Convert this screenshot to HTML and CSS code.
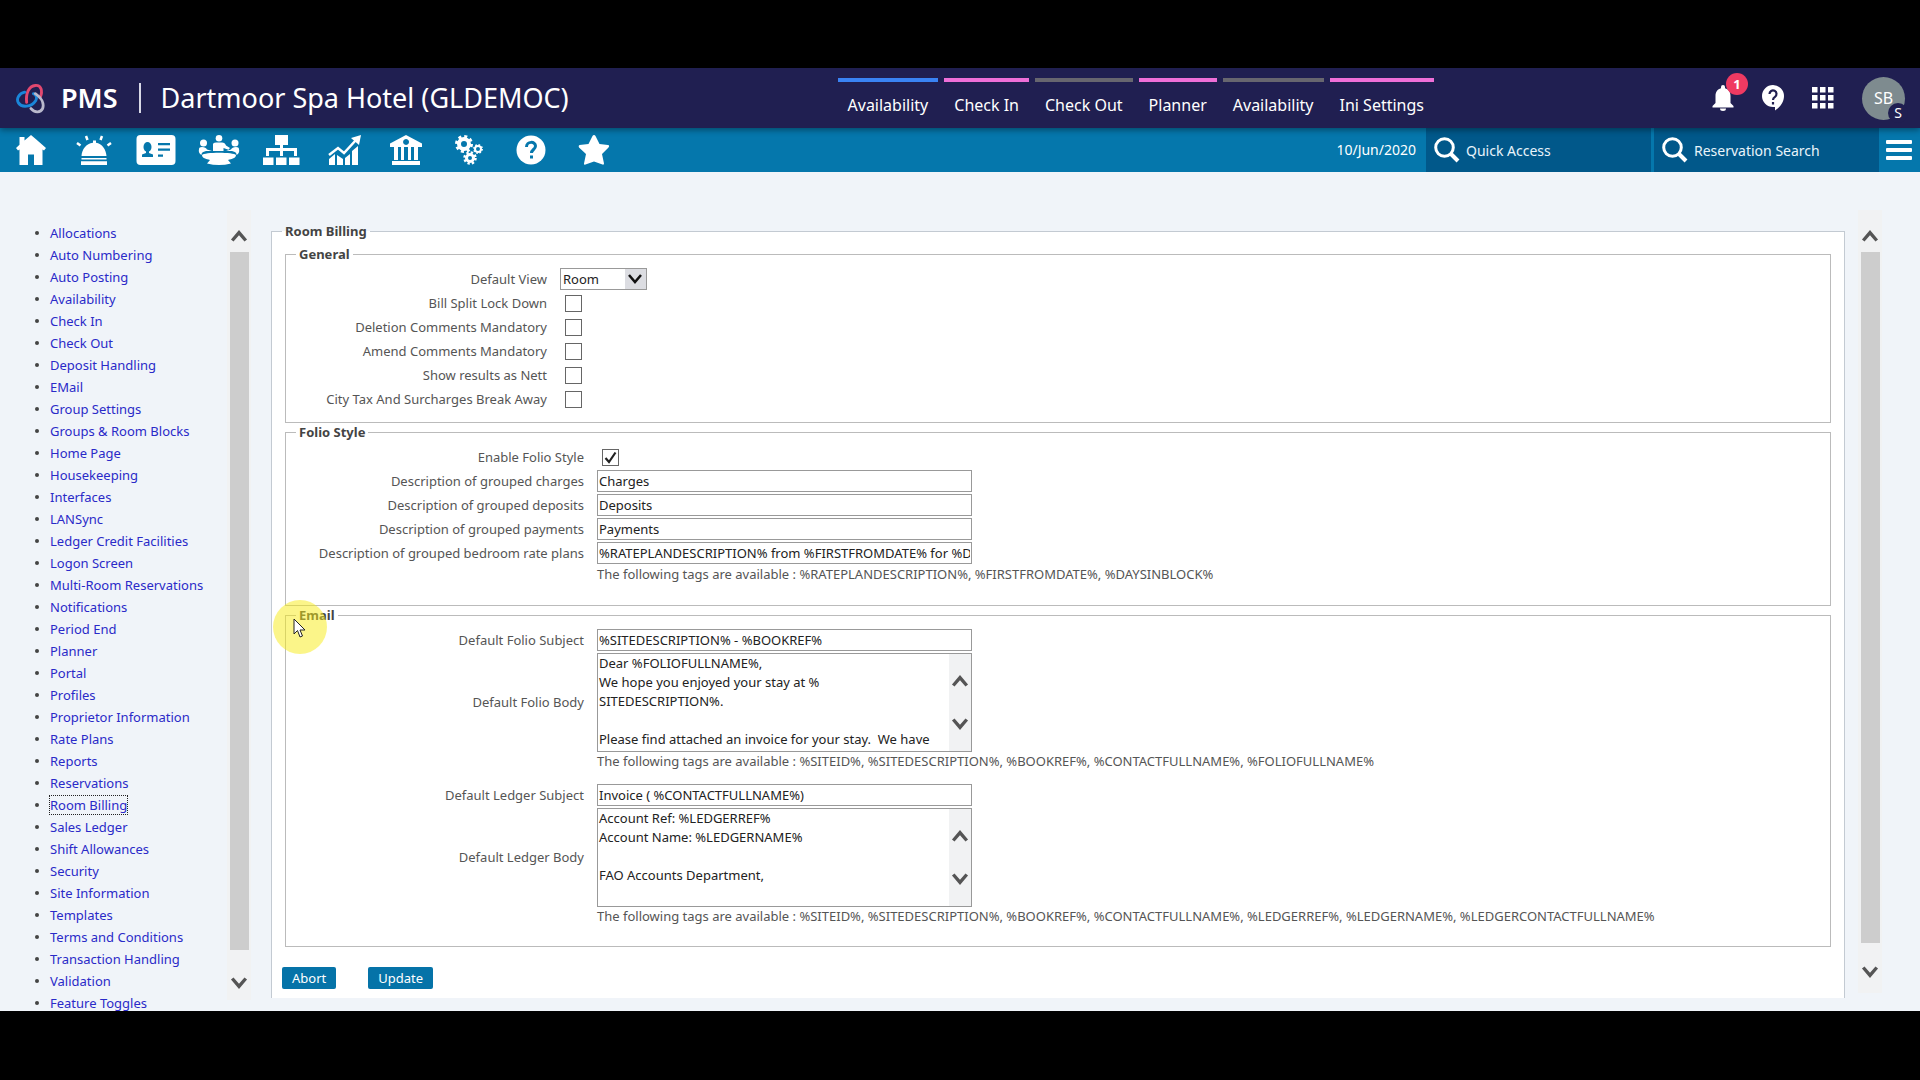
FILE: index.html
```html
<!DOCTYPE html>
<html lang="en">
<head>
    <meta charset="UTF-8">
    <meta name="viewport" content="width=device-width, initial-scale=1.0">
    <title>PMS - Room Billing</title>
    <link rel="stylesheet" href="styles.css">
</head>
<body>
    <header class="topbar">
        <svg class="logo" viewBox="0 0 30 32" fill="none" stroke-width="3" stroke-linecap="round">
            <path d="M11 20C10 11 13 3 20 2.500C26 2 28 8 25 15" stroke="#e2486f"/>
            <path d="M9 9.500C3 11 0 16 2.500 20.500C6 26 16 25 20.500 18C22 15 21 12 18 11" stroke="#1a86d9"/>
            <path d="M20 11C26 15 29.500 21 27.500 26.500C25 31.500 19 30.500 15.500 26.500" stroke="#b9b9cc"/>
        </svg>
        <span class="brand">PMS</span>
        <h1 class="hotel">Dartmoor Spa Hotel (GLDEMOC)</h1>
        <nav class="tabs">
            <a href="#" class="blue">Availability</a>
            <a href="#" class="pink">Check In</a>
            <a href="#">Check Out</a>
            <a href="#" class="pink">Planner</a>
            <a href="#">Availability</a>
            <a href="#" class="pink">Ini Settings</a>
        </nav>
        <div class="user-tools">
            <button class="tool bell" aria-label="Notifications">
                <svg viewBox="0 0 22 26" fill="#fff"><path d="M11 0a2 2 0 0 1 2 2v1.200C16.500 4.200 18.500 7 18.500 11v7l3 3v1.500H.5V21l3-3v-7C3.500 7 5.500 4.200 9 3.200V2a2 2 0 0 1 2-2zM8 23.500h6a3 2.500 0 0 1-6 0z"/></svg>
                <span class="badge">1</span>
            </button>
            <button class="tool" aria-label="Help">
                <svg viewBox="0 0 22 26"><path d="M11 0a11 11 0 0 1 11 11c0 6-4 11.500-9 14.500V22h-2A11 11 0 0 1 11 0z" fill="#fff"/><path d="M7.500 9a3.500 3.500 0 1 1 5.500 2.800c-1.500 1-2 1.600-2 3.200M11 17v2.500" fill="none" stroke="#201f51" stroke-width="2.200"/></svg>
            </button>
            <button class="tool" aria-label="Apps">
                <svg viewBox="0 0 22 26" fill="#fff"><path d="M0 2h5.500v5.500H0zM8 2h5.500v5.500H8zM16 2h5.500v5.500H16zM0 10h5.500v5.500H0zM8 10h5.500v5.500H8zM16 10h5.500v5.500H16zM0 18h5.500v5.500H0zM8 18h5.500v5.500H8zM16 18h5.500v5.500H16z"/></svg>
            </button>
            <button class="avatar">SB<span class="status">S</span></button>
        </div>
    </header>

    <div class="toolbar">
        <nav class="icons">
            <a href="#" aria-label="Home"><svg viewBox="0 0 42 30"><path d="M21 0l5 4.200L36 13l-2 2.500-1.500-1V30H24V19.500h-6V30H9.500V14.500L8 15.500 6 13l3.500-3.200V2h5v3.500z"/></svg></a>
            <a href="#" aria-label="Reception"><svg viewBox="0 0 42 30"><path d="M20 5.500h3v2.200C29 8.700 33 14 33.500 21h-25C9 14 13 8.700 20 7.700zM8.500 23h25v1.600h-25zM8 26.200h26V30H8z"/><path d="M13 1l1.500 4M29 1l-1.500 4M4 8l3.500 2.500M38 8l-3.500 2.500" stroke="#fff" stroke-width="2.500"/></svg></a>
            <a href="#" aria-label="Profiles"><svg viewBox="0 0 42 30"><rect x="1.500" width="39" height="30" rx="4"/><g fill="#0577ac"><ellipse cx="12.500" cy="12" rx="4" ry="5"/><path d="M11 15h3v3l4 1.500V22H7v-2.500l4-1.500zM23 8h12v2.200H23zM23 13.500h12v2.200H23zM23 19.500h5v2.200h-5z"/></g></svg></a>
            <a href="#" aria-label="Groups"><svg viewBox="0 0 42 30"><circle cx="21" cy="3.300" r="3.300"/><circle cx="5.500" cy="8" r="3.500"/><circle cx="37" cy="8" r="3.500"/><path d="M15 9.500q0-2 3-2h6q3 0 4 3l4 2.500-1.500 1.700-5-1.700V16H15zM1 14q0-2 3-2 4 0 5 2.500l5 1.500H8q-5 1-4.500 4Q0 18 1 14zM41 14q0-2-3-2-4 0-5 2.500L28 16h6q5 1 4.500 4 3.500-2 2.500-6z"/><path d="M4 20c2-3 32-3 34 0 0 3-4 4-8 5l3 3.500q-12 3-24 0l3-3.500C8 24 4 23 4 20z"/></svg></a>
            <a href="#" aria-label="Structure"><svg viewBox="0 0 42 30"><path d="M15 0h13v10h-5v3h14v8h-3v-5H23v5h-3v-5H9v5H6v-8h14v-3h-5zM3 22.500h10.500V30H3zM16 22.500h10.500V30H16zM29 22.500h10.500V30H29z"/></svg></a>
            <a href="#" aria-label="Reports"><svg viewBox="0 0 42 30"><path d="M6 24l6-5v11H6zM14 20l6 4v6h-6zM22 23l5-4v11h-5zM29 16l6-5v19h-6z"/><path d="M6 20l9-7 6 5L33 5" fill="none" stroke="#fff" stroke-width="2.500"/><path d="M28 3l10-3-2 10z"/></svg></a>
            <a href="#" aria-label="Accounts"><svg viewBox="0 0 42 30"><path fill-rule="evenodd" d="M21 0l16 8.500V12H5V8.500zM21 4a3 3 0 1 0 .1 0zM9 12h4v13H9zM16 12h3v13h-3zM23 12h3v13h-3zM29 12h4v13h-4zM7 26h28v4H7z"/></svg></a>
            <a href="#" aria-label="Setup"><svg viewBox="0 0 42 30" fill="none" stroke="#fff"><g fill="none"><circle cx="16" cy="9" r="5" stroke-width="4"/><circle cx="16" cy="9" r="7.500" stroke-width="3" stroke-dasharray="3 2.890"/><circle cx="22" cy="23" r="3.500" stroke-width="3"/><circle cx="22" cy="23" r="5.500" stroke-width="2.500" stroke-dasharray="2.300 2.020"/><circle cx="30" cy="14" r="3" stroke-width="2"/><circle cx="30" cy="14" r="4.200" stroke-width="1.500" stroke-dasharray="1.600 1.700"/></g></svg></a>
            <a href="#" aria-label="Help"><svg viewBox="0 0 42 30"><circle cx="21" cy="15" r="14.500"/><path d="M16.500 12c0-6 9-6 9-1 0 3.500-4 3.500-4 7M21.500 20.500v3" fill="none" stroke="#0577ac" stroke-width="3"/></svg></a>
            <a href="#" aria-label="Favourites"><svg viewBox="0 0 42 30"><path d="M21 0q1 0 1.500 1l4 8 8.500 1q2 .5.5 2.500L29 19l2 9.500q0 1.500-1.500 1L21 26.500l-8.500 3q-2 .5-1.500-1L13 19l-7-6.500q-1-2 .5-2.500l9-1 4-8Q20 0 21 0z"/></svg></a>
        </nav>
        <span class="date">10/Jun/2020</span>
        <label class="search">
            <svg viewBox="0 0 26 26"><circle cx="10.500" cy="10.500" r="8.800"/><path d="M17 17l7 7" stroke-width="4"/></svg>
            <input type="text" placeholder="Quick Access">
        </label>
        <label class="search">
            <svg viewBox="0 0 26 26"><circle cx="10.500" cy="10.500" r="8.800"/><path d="M17 17l7 7" stroke-width="4"/></svg>
            <input type="text" placeholder="Reservation Search">
        </label>
        <button class="menu" aria-label="Menu"><i></i><i></i><i></i></button>
    </div>

    <div class="content">
        <nav class="sidebar">
            <ul>
                <li><a href="#">Allocations</a></li>
                <li><a href="#">Auto Numbering</a></li>
                <li><a href="#">Auto Posting</a></li>
                <li><a href="#">Availability</a></li>
                <li><a href="#">Check In</a></li>
                <li><a href="#">Check Out</a></li>
                <li><a href="#">Deposit Handling</a></li>
                <li><a href="#">EMail</a></li>
                <li><a href="#">Group Settings</a></li>
                <li><a href="#">Groups &amp; Room Blocks</a></li>
                <li><a href="#">Home Page</a></li>
                <li><a href="#">Housekeeping</a></li>
                <li><a href="#">Interfaces</a></li>
                <li><a href="#">LANSync</a></li>
                <li><a href="#">Ledger Credit Facilities</a></li>
                <li><a href="#">Logon Screen</a></li>
                <li><a href="#">Multi-Room Reservations</a></li>
                <li><a href="#">Notifications</a></li>
                <li><a href="#">Period End</a></li>
                <li><a href="#">Planner</a></li>
                <li><a href="#">Portal</a></li>
                <li><a href="#">Profiles</a></li>
                <li><a href="#">Proprietor Information</a></li>
                <li><a href="#">Rate Plans</a></li>
                <li><a href="#">Reports</a></li>
                <li><a href="#">Reservations</a></li>
                <li><a href="#" class="current">Room Billing</a></li>
                <li><a href="#">Sales Ledger</a></li>
                <li><a href="#">Shift Allowances</a></li>
                <li><a href="#">Security</a></li>
                <li><a href="#">Site Information</a></li>
                <li><a href="#">Templates</a></li>
                <li><a href="#">Terms and Conditions</a></li>
                <li><a href="#">Transaction Handling</a></li>
                <li><a href="#">Validation</a></li>
                <li><a href="#">Feature Toggles</a></li>
            </ul>
        </nav>
        <div class="scrollbar side-scroll">
            <svg viewBox="0 0 16 12"><path d="M2 10l6-7 6 7"/></svg>
            <div class="thumb"></div>
            <svg viewBox="0 0 16 12"><path d="M2 2l6 7 6-7"/></svg>
        </div>

        <main class="panel">
            <fieldset class="outer">
                <legend>Room Billing</legend>

                <fieldset class="general">
                    <legend>General</legend>
                    <div class="row">
                        <label for="defaultView">Default View</label>
                        <div class="select-box">
                            <select id="defaultView"><option>Room</option></select>
                            <svg viewBox="0 0 14 10"><path d="M1 1l6 7 6-7"/></svg>
                        </div>
                    </div>
                    <div class="row">
                        <label for="billSplit">Bill Split Lock Down</label>
                        <input type="checkbox" id="billSplit">
                    </div>
                    <div class="row">
                        <label for="deletionComments">Deletion Comments Mandatory</label>
                        <input type="checkbox" id="deletionComments">
                    </div>
                    <div class="row">
                        <label for="amendComments">Amend Comments Mandatory</label>
                        <input type="checkbox" id="amendComments">
                    </div>
                    <div class="row">
                        <label for="showNett">Show results as Nett</label>
                        <input type="checkbox" id="showNett">
                    </div>
                    <div class="row">
                        <label for="cityTax">City Tax And Surcharges Break Away</label>
                        <input type="checkbox" id="cityTax">
                    </div>
                </fieldset>

                <fieldset class="folio">
                    <legend>Folio Style</legend>
                    <div class="row">
                        <label for="folioStyle">Enable Folio Style</label>
                        <input type="checkbox" id="folioStyle" checked>
                    </div>
                    <div class="row">
                        <label for="charges">Description of grouped charges</label>
                        <input type="text" id="charges" value="Charges">
                    </div>
                    <div class="row">
                        <label for="deposits">Description of grouped deposits</label>
                        <input type="text" id="deposits" value="Deposits">
                    </div>
                    <div class="row">
                        <label for="payments">Description of grouped payments</label>
                        <input type="text" id="payments" value="Payments">
                    </div>
                    <div class="row">
                        <label for="ratePlans">Description of grouped bedroom rate plans</label>
                        <input type="text" id="ratePlans" value="%RATEPLANDESCRIPTION% from %FIRSTFROMDATE% for %DAYSINBLOCK%">
                    </div>
                    <p class="tags">The following tags are available : %RATEPLANDESCRIPTION%, %FIRSTFROMDATE%, %DAYSINBLOCK%</p>
                </fieldset>

                <fieldset class="email">
                    <legend>Email</legend>
                    <!-- mouse pointer with its highlight -->
                    <div class="pointer">
                        <svg viewBox="0 0 13 20"><path d="M1 1v15l3.500-3.500L7 19l2.500-1L7 12h5z" fill="#fff" stroke="#222"/></svg>
                    </div>
                    <div class="row">
                        <label for="folioSubject">Default Folio Subject</label>
                        <input type="text" id="folioSubject" value="%SITEDESCRIPTION% - %BOOKREF%">
                    </div>
                    <div class="row body-row">
                        <label for="folioBody">Default Folio Body</label>
                        <div class="text-box">
                            <textarea id="folioBody">Dear %FOLIOFULLNAME%,
We hope you enjoyed your stay at %
SITEDESCRIPTION%.

Please find attached an invoice for your stay.  We have</textarea>
                            <div class="scrollbar">
                                <svg viewBox="0 0 16 12"><path d="M2 10l6-7 6 7"/></svg>
                                <svg viewBox="0 0 16 12"><path d="M2 2l6 7 6-7"/></svg>
                            </div>
                        </div>
                    </div>
                    <p class="tags">The following tags are available : %SITEID%, %SITEDESCRIPTION%, %BOOKREF%, %CONTACTFULLNAME%, %FOLIOFULLNAME%</p>
                    <div class="row ledger">
                        <label for="ledgerSubject">Default Ledger Subject</label>
                        <input type="text" id="ledgerSubject" value="Invoice ( %CONTACTFULLNAME%)">
                    </div>
                    <div class="row body-row">
                        <label for="ledgerBody">Default Ledger Body</label>
                        <div class="text-box">
                            <textarea id="ledgerBody">Account Ref: %LEDGERREF%
Account Name: %LEDGERNAME%

FAO Accounts Department,
</textarea>
                            <div class="scrollbar">
                                <svg viewBox="0 0 16 12"><path d="M2 10l6-7 6 7"/></svg>
                                <svg viewBox="0 0 16 12"><path d="M2 2l6 7 6-7"/></svg>
                            </div>
                        </div>
                    </div>
                    <p class="tags">The following tags are available : %SITEID%, %SITEDESCRIPTION%, %BOOKREF%, %CONTACTFULLNAME%, %LEDGERREF%, %LEDGERNAME%, %LEDGERCONTACTFULLNAME%</p>
                </fieldset>

                <div class="actions">
                    <button>Abort</button>
                    <button>Update</button>
                </div>
            </fieldset>
        </main>
        <div class="scrollbar main-scroll">
            <svg viewBox="0 0 16 12"><path d="M2 10l6-7 6 7"/></svg>
            <div class="thumb"></div>
            <svg viewBox="0 0 16 12"><path d="M2 2l6 7 6-7"/></svg>
        </div>
    </div>
</body>
</html>
```
FILE: styles.css
```css
* {
    box-sizing: border-box;
}

body {
    font-family: "Noto Sans", "Open Sans", sans-serif;
    font-size: 13px;
    line-height: 18px;
    color: #555;
    background-color: #000;
    margin: 0;
    padding: 68px 0 69px;
    height: 100vh;
    display: flex;
    flex-direction: column;
}

a {
    text-decoration: none;
}

button, input, select, textarea {
    font-family: inherit;
    font-size: inherit;
    margin: 0;
}

button {
    border: none;
    padding: 0;
    color: #fff;
    cursor: pointer;
}

/* top bar */
.topbar {
    flex: none;
    height: 60px;
    background-color: #201f51;
    color: #fff;
    display: flex;
    align-items: center;
    position: relative;
    z-index: 1;
    box-shadow: 0 2px 6px rgba(0, 0, 0, 0.4);
}

.logo {
    width: 29px;
    height: 31px;
    margin-left: 16px;
}

.brand {
    font-size: 27px;
    font-weight: 600;
    margin-left: 16px;
}

.hotel {
    flex: 1;
    font-size: 27px;
    font-weight: normal;
    line-height: 30px;
    margin: 0 0 0 21px;
    padding-left: 20px;
    border-left: 2px solid #d8d8e6;
}

.tabs {
    display: flex;
    gap: 6px;
    align-self: flex-start;
    margin-top: 10px;
}

.tabs a {
    color: #fff;
    font-size: 16px;
    line-height: 24px;
    padding: 11px 10px 0;
    border-top: 4px solid #67666f;
}

.tabs .blue {
    border-color: #3a83f4;
}

.tabs .pink {
    border-color: #ee6fd8;
}

.user-tools {
    display: flex;
    align-items: center;
    margin: 0 15px 0 278px;
}

.tool {
    position: relative;
    width: 22px;
    height: 26px;
    margin-right: 28px;
    background: none;
}

.tool svg {
    display: block;
    width: 22px;
    height: 26px;
}

.badge {
    position: absolute;
    left: 14px;
    top: -12px;
    width: 22px;
    height: 22px;
    line-height: 22px;
    border-radius: 50%;
    background-color: #ef3a62;
    font-weight: bold;
}

.avatar {
    position: relative;
    width: 43px;
    height: 43px;
    border-radius: 50%;
    background-color: #7e8b8f;
    font-size: 16px;
}

.status {
    position: absolute;
    left: 26px;
    top: 26px;
    width: 20px;
    height: 20px;
    line-height: 20px;
    border-radius: 50%;
    background-color: #201f51;
    font-size: 14px;
}

/* icon bar */
.toolbar {
    flex: none;
    height: 44px;
    background-color: #0577ac;
    display: flex;
    align-items: stretch;
    color: #fff;
}

.icons {
    display: flex;
    width: 625px;
    margin-right: auto;
}

.icons a {
    flex: 1;
    display: flex;
    align-items: center;
    justify-content: center;
}

.icons svg {
    width: 42px;
    height: 30px;
    fill: #fff;
}

.date {
    font-size: 14px;
    line-height: 44px;
    padding-right: 10px;
}

.search {
    width: 225px;
    margin-right: 3px;
    padding-left: 8px;
    background-color: #01588a;
    display: flex;
    align-items: center;
    gap: 6px;
}

.search svg {
    flex: none;
    width: 26px;
    height: 26px;
    fill: none;
    stroke: #fff;
    stroke-width: 3px;
}

.search input {
    flex: 1;
    min-width: 0;
    border: none;
    padding: 0;
    background: none;
    color: #fff;
    font-size: 14px;
}

.search input::placeholder {
    color: #e8f4fb;
}

.menu {
    width: 38px;
    padding-right: 4px;
    background: none;
    display: flex;
    flex-direction: column;
    justify-content: center;
    align-items: center;
    gap: 4px;
}

.menu i {
    width: 26px;
    height: 4px;
    border-radius: 1px;
    background-color: #fff;
}

/* page body */
.content {
    flex: 1;
    min-height: 0;
    background-color: #f0f4f9;
    display: flex;
    padding-top: 38px;
    overflow: hidden;
}

.sidebar {
    width: 227px;
}

.sidebar ul {
    list-style: none;
    margin: 12px 0 0;
    padding: 0 0 0 35px;
}

.sidebar li {
    display: flex;
    align-items: center;
    gap: 11px;
    height: 22px;
}

.sidebar li::before {
    content: "";
    width: 4px;
    height: 4px;
    border-radius: 50%;
    background-color: #444;
}

.sidebar a {
    color: #2a2ac8;
}

.sidebar .current {
    outline: 1px dotted #222;
}

/* scrollbars */
.scrollbar {
    flex: none;
    width: 24px;
    background-color: #f1f2f3;
    display: flex;
    flex-direction: column;
    align-items: center;
}

.scrollbar svg {
    width: 18px;
    height: 14px;
    fill: none;
    stroke: #555;
    stroke-width: 3px;
}

.thumb {
    flex: 1;
    width: 19px;
    margin: 9px 0 26px;
    background-color: #cdcdcd;
}

.side-scroll {
    padding: 19px 0 10px;
    margin-bottom: 11px;
}

.main-scroll {
    padding: 19px 0 14px;
    margin: 0 38px 18px 13px;
}

.main-scroll .thumb {
    margin-bottom: 22px;
}

/* settings form */
.panel {
    flex: 1;
    min-width: 0;
    padding: 12px 0 13px 20px;
    display: flex;
}

fieldset {
    margin: 0 3px;
    padding: 4px 10px 11px;
    border: 1px solid #bbb;
    min-width: 0;
}

legend {
    padding: 0 3px;
    font-weight: bold;
    color: #444;
}

.outer {
    flex: 1;
    margin: 0;
    padding: 5px 10px 0;
    background-color: #fff;
    border-color: #c3cad2;
    border-bottom: none;
}

.folio {
    padding-bottom: 22px;
}

.email {
    position: relative;
    padding-bottom: 21px;
}

.row {
    display: grid;
    grid-template-columns: 288px 375px;
    column-gap: 13px;
    align-items: center;
    height: 24px;
}

.general .row {
    grid-template-columns: 251px 375px;
}

.row label {
    text-align: right;
    white-space: nowrap;
}

.row input[type="text"] {
    height: 22px;
    padding: 0 1px;
    border: 1px solid #999;
    color: #222;
}

.row input[type="checkbox"] {
    appearance: none;
    width: 17px;
    height: 17px;
    margin-left: 5px;
    border: 1px solid #666;
    background-color: #fff;
}

.row input[type="checkbox"]:checked {
    background: url('data:image/svg+xml,<svg xmlns="http://www.w3.org/2000/svg" viewBox="0 0 15 15"><path d="M2.500 8l3.500 4L12.500 2.500" fill="none" stroke="%23222" stroke-width="2.200"/></svg>') center no-repeat;
}

.select-box {
    position: relative;
    width: 87px;
    height: 22px;
    background: linear-gradient(to right, #fff 65px, #dcdde2 65px);
}

.select-box select {
    width: 100%;
    height: 100%;
    appearance: none;
    border: 1px solid #999;
    border-radius: 0;
    padding: 0 2px;
    background: none;
    color: #222;
}

.select-box svg {
    position: absolute;
    right: 5px;
    top: 6px;
    width: 14px;
    height: 10px;
    fill: none;
    stroke: #111;
    stroke-width: 2.5px;
    pointer-events: none;
}

.body-row {
    height: 100px;
}

.text-box {
    display: flex;
    height: 99px;
    border: 1px solid #999;
    background-color: #fff;
}

.text-box textarea {
    flex: 1;
    min-width: 0;
    border: none;
    padding: 0 1px;
    line-height: 19px;
    color: #222;
    background: none;
    resize: none;
    white-space: pre;
    overflow: hidden;
}

.text-box .scrollbar {
    width: 22px;
    padding: 20px 0;
    justify-content: space-between;
}

.tags {
    margin: 0 0 0 301px;
    white-space: nowrap;
}

.ledger {
    margin-top: 13px;
}

.pointer {
    position: absolute;
    left: -13px;
    top: -24px;
    width: 54px;
    height: 54px;
    padding: 18px 0 0 20px;
    border-radius: 50%;
    background-color: rgba(247, 236, 20, 0.5);
}

.pointer svg {
    display: block;
    width: 13px;
    height: 20px;
}

.actions {
    display: flex;
    gap: 32px;
    margin-top: 20px;
}

.actions button {
    height: 22px;
    padding: 0 10px;
    border-radius: 2px;
    background-color: #0573a8;
}
```
